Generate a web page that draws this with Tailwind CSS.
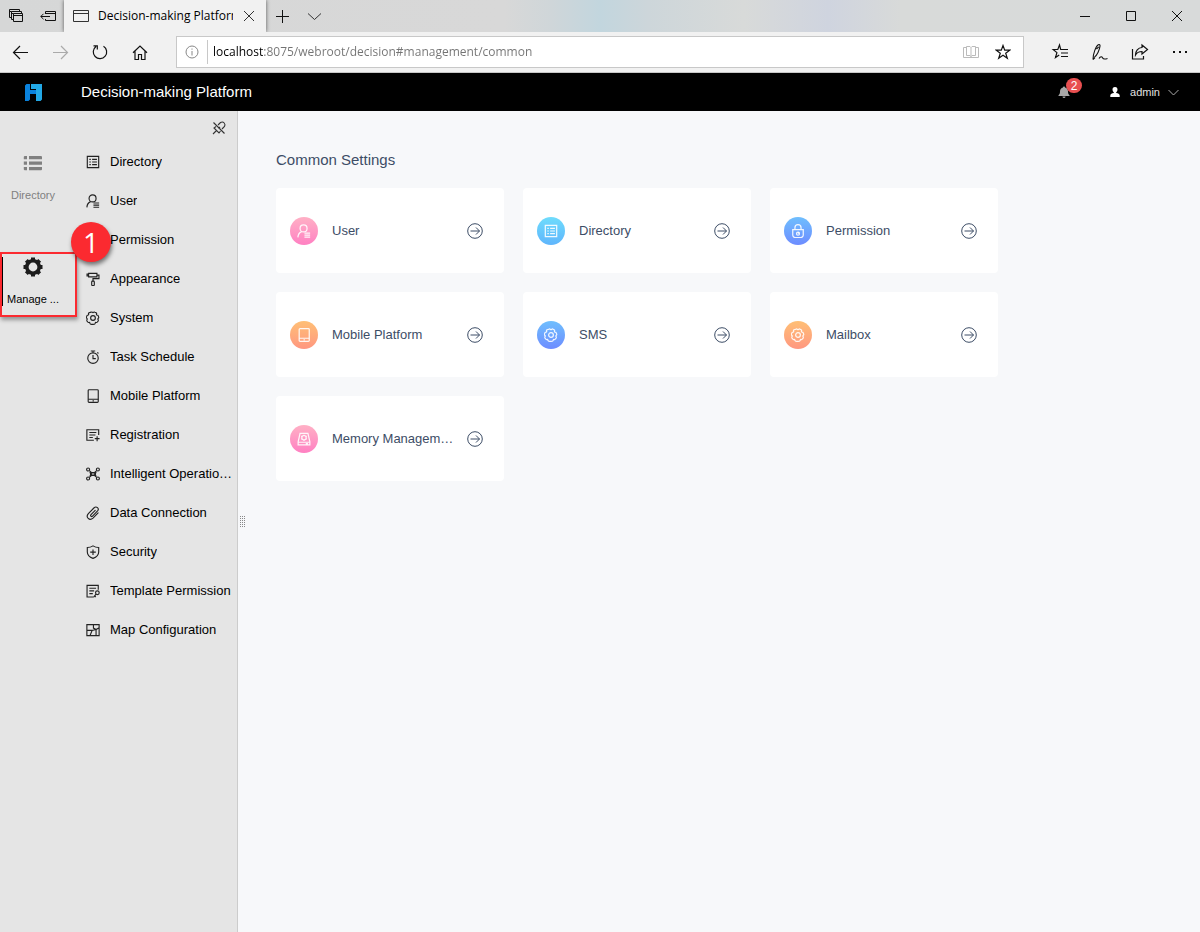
<!DOCTYPE html>
<html lang="en">
<head>
<meta charset="utf-8">
<title>Decision-making Platform</title>
<script src="https://cdn.jsdelivr.net/npm/@tailwindcss/browser@4"></script>
</head>
<body class="flex min-h-screen flex-col bg-[#f7f8fa] font-['Liberation_Sans',Arial,sans-serif] text-black">
<svg class="hidden" aria-hidden="true">
  <defs>
    <symbol id="i-directory" viewBox="0 0 16 16"><path d="M1.500 1.500h13v13h-13zM3.800 5h1.700M7 5h5.500M3.800 8h1.700M7 8h5.500M3.800 11h1.700M7 11h5.500"/></symbol>
    <symbol id="i-user" viewBox="0 0 16 16"><circle cx="7.500" cy="5" r="4"/><path d="M1 15.300c.2-3.400 1.800-5.600 4.300-6.600M8.500 10.300H15M8.500 12.700H15M8.500 15.100H15"/></symbol>
    <symbol id="i-lock" viewBox="0 0 16 16"><path d="M2 6.500h12V12.500a3 3 0 0 1-3 3H5a3 3 0 0 1-3-3zM4.500 6.500V4.200a3.500 3.500 0 0 1 7 0V6.500"/><circle cx="8" cy="11" r="1.700"/><path d="M8 11l1.200-1.800"/></symbol>
    <symbol id="i-roller" viewBox="0 0 16 16"><path d="M3 1.500h9.500v4H3zM3 2.500H1.200v2H3M12.500 3.500h2.300v4H8v3"/><rect x="6.500" y="10.500" width="3" height="5" rx="1"/></symbol>
    <symbol id="i-gear" viewBox="0 0 16 16"><path d="M5.900 1.300c.7-.4 1.200-.2 1.500.4.300.4.900.4 1.200 0 .3-.6.800-.8 1.500-.4l1.400.7c.7.4.8.900.5 1.500-.2.500.100 1 .6 1.100.700 0 1.200.4 1.400 1l.5 1.400c.2.700 0 1.200-.6 1.600-.4.300-.4.800-.1 1.200.4.600.4 1.100 0 1.700l-.8 1.100c-.4.600-.9.700-1.500.5-.5-.1-.9.200-.9.700 0 .7-.3 1.100-1 1.300l-1.600.2H6.400l-1-.2c-.7-.2-1-.6-1-1.300 0-.5-.4-.8-.9-.7-.6.200-1.100.1-1.500-.5l-.8-1.100c-.4-.6-.4-1.100 0-1.700.3-.4.300-.9-.1-1.200-.6-.4-.8-.9-.6-1.600L1 5.600c.2-.6.700-1 1.400-1 .5-.1.800-.6.600-1.100-.3-.6-.2-1.100.5-1.500z"/><circle cx="8" cy="8" r="2.700"/></symbol>
    <symbol id="i-clock" viewBox="0 0 16 16"><circle cx="8" cy="9.300" r="6"/><path d="M5.500 1.200h5M8 1.200v2M8 5.800v4h3.200M13 2.800l1.200 1.200"/></symbol>
    <symbol id="i-mobile" viewBox="0 0 16 16"><rect x="2.500" y=".800" width="11.500" height="14.500" rx="1"/><path d="M2.500 11.700H14M7.500 13.500h1.500"/></symbol>
    <symbol id="i-registration" viewBox="0 0 16 16"><path d="M14.500 8V2H1v12h8M3.800 5.200h8M3.800 8h7M3.800 10.800h4M12.700 9.500v5.500M10 12.200h5.500"/></symbol>
    <symbol id="i-network" viewBox="0 0 16 16"><circle cx="2.400" cy="2.900" r="1.700"/><circle cx="13.600" cy="2.900" r="1.700"/><circle cx="2.400" cy="13.100" r="1.700"/><circle cx="13.600" cy="13.100" r="1.700"/><circle cx="8" cy="8" r="1.700"/><path d="M3.800 4.100 6.800 6.800M12.200 4.100 9.200 6.800M3.800 11.900l3-2.700M12.200 11.900l-3-2.700M4.500 5.500C5.500 9 6 8 4.500 10.500M11.500 5.500c-1 3.500-1.500 2.500 0 5M6.500 6.500h3M6.500 9.500h3"/></symbol>
    <symbol id="i-clip" viewBox="0 0 16 16"><path d="m10.500 5-4.800 4.900c-1.200 1.400.6 2.900 1.800 1.700l5.700-5.900c2.400-2.900-1.300-6.200-4.200-3.400L2.700 8.600c-3.600 4.200 1.400 8.900 5.300 5.200l5.800-5.900" stroke-linecap="round"/></symbol>
    <symbol id="i-shield" viewBox="0 0 16 16"><path d="M8 1c2 1.300 4.200 1.900 6.500 1.900V8c0 3.500-2.500 5.800-6.500 7.300C4 13.800 1.500 11.500 1.500 8V2.900C3.800 2.900 6 2.300 8 1zM8 5v6.500M4.800 8.200h6.400"/></symbol>
    <symbol id="i-template" viewBox="0 0 16 16"><path d="M14 6.500V1.500H1.200v13.300H8M3.800 4.800h7.700M3.800 7.900h5.500M3.800 11h4"/><circle cx="13" cy="10" r="2.100"/><path d="m11.500 11.500-3 3.700M9.800 13.600l1.400 1.200"/></symbol>
    <symbol id="i-map" viewBox="0 0 16 16"><path d="M1 1.800h14v12.700H1zM1 8.500h6l-2.500 6M8.500 1.800v4l3 1.700L15 5.500M7 8.500l4.500-1v7"/></symbol>
    <symbol id="i-memory" viewBox="0 0 16 16"><path d="M3.500 1.500h9l2.200 9.700v3.500H1.300v-3.500zM1.300 11.700h13.400M10 13.200h2.500"/><circle cx="8" cy="6.500" r="2.500"/><path d="M8 3v1M8 9v1M5 4.700l.8.500M10.200 7.800l.8.500M5 8.300l.8-.5M10.200 5.200l.8-.5"/></symbol>
    <symbol id="i-go" viewBox="0 0 16 16"><circle cx="8" cy="8" r="7.300"/><path d="M3.500 8h9M9 4.500 12.500 8 9 11.500"/></symbol>
  </defs>
</svg>

<!-- Browser window: tab strip -->
<div class="flex h-8 shrink-0 items-stretch bg-[linear-gradient(90deg,#d6d7d7_0%,#d8d8d8_42%,#cfd6d9_46%,#c2d6de_50%,#cdd6da_54%,#d8dad9_62%,#cfd4df_69%,#d8dad9_75%,#d8dada_100%)]">
  <div class="flex w-16 items-center justify-between pr-2 pl-2">
    <button aria-label="Tabs you've set aside"><svg class="size-4" viewBox="0 0 16 16" fill="none" stroke="#111"><path d="M3.500 9.500h-2v-8h10v2M1.500 3.500h2M5.500 11.500h-2v-8h10v2M3.500 5.500h2"/><path d="M5.500 5.500h9v8h-9zM5.500 7.500h9"/></svg></button>
    <button aria-label="Set these tabs aside"><svg class="size-4" viewBox="0 0 16 16" fill="none" stroke="#111"><path d="M5.500 6V3.500h10v9h-10V11M5.500 5.500h10M10 8.500H.800M3.500 5.800.800 8.500l2.700 2.700"/></svg></button>
  </div>
  <div class="flex w-[202px] items-center bg-[#f1f1f1] px-2 shadow-[0_0_4px_rgba(0,0,0,0.6)] [clip-path:inset(0_-5px_0_-5px)]">
    <svg class="h-4 w-[18px] shrink-0" viewBox="0 0 18 16" fill="none" stroke="#333"><path d="M1.500 2.500h15v11h-15zM1.500 5.500h15"/></svg>
    <button class="ml-2 w-[135px] overflow-hidden text-left font-['Open_Sans',sans-serif] text-[12px] leading-5 whitespace-nowrap">Decision-making Platform</button>
    <button class="ml-2" aria-label="Close tab"><svg class="size-4" viewBox="0 0 16 16" fill="none" stroke="#333"><path d="m3 3 10 10M13 3 3 13"/></svg></button>
  </div>
  <div class="flex items-center gap-4 pl-2">
    <button aria-label="New tab"><svg class="size-4" viewBox="0 0 16 16" fill="none" stroke="#111"><path d="M8.500 2v13M2 8.500h13"/></svg></button>
    <button aria-label="Tab previews"><svg class="size-4" viewBox="0 0 16 16" fill="none" stroke="#333"><path d="m2 5.500 6.500 6 6.500-6"/></svg></button>
  </div>
  <div class="ml-auto flex items-center gap-[30px] pr-[15px]">
    <button aria-label="Minimize"><svg class="size-4" viewBox="0 0 16 16" fill="none" stroke="#111"><path d="M3 8.500h10"/></svg></button>
    <button aria-label="Maximize"><svg class="size-4" viewBox="0 0 16 16" fill="none" stroke="#111"><path d="M3.500 3.500h9v9h-9z"/></svg></button>
    <button aria-label="Close"><svg class="size-4" viewBox="0 0 16 16" fill="none" stroke="#111"><path d="m3 3 10 10M13 3 3 13"/></svg></button>
  </div>
</div>

<!-- Browser window: address bar -->
<div class="flex h-[41px] shrink-0 items-center border-b border-[#c8c8c8] bg-[#f1f1f1]">
  <div class="flex w-44 items-center gap-5 pl-[10px]">
    <button aria-label="Back"><svg class="size-5" viewBox="0 0 20 20" fill="none" stroke="#111" stroke-width="1.200"><path d="M18 10.500H3.500M10 4 3.500 10.500l6.500 6.500"/></svg></button>
    <button aria-label="Forward"><svg class="size-5" viewBox="0 0 20 20" fill="none" stroke="#aaa" stroke-width="1.200"><path d="M3 10.500h14.500M11 4l6.500 6.500-6.500 6.500"/></svg></button>
    <button aria-label="Refresh"><svg class="size-5" viewBox="0 0 20 20" fill="none" stroke="#111" stroke-width="1.200"><path d="M13.500 4.200a6.700 6.700 0 1 1-7.500.3M3.500 3.800h3.800v3.800"/></svg></button>
    <button aria-label="Home"><svg class="size-5" viewBox="0 0 20 20" fill="none" stroke="#111" stroke-width="1.200"><path d="M3 10.800 10 4l7 6.800M5 9v8.500h3.500v-5h3v5H15V9"/></svg></button>
  </div>
  <div class="flex h-8 flex-1 items-center border border-[#c8c8c8] bg-white">
    <svg class="ml-[7px] size-4" viewBox="0 0 16 16" fill="none" stroke="#888"><circle cx="8" cy="8" r="6"/><path d="M8 7v4.500M8 4.500v1.200"/></svg>
    <span class="ml-[7px] h-6 w-px bg-[#c8c8c8]"></span>
    <input aria-label="Address" value="localhost:8075/webroot/decision#management/common" class="ml-[5px] min-w-0 flex-1 bg-[linear-gradient(90deg,#000_51px,#737373_51px)] bg-clip-text font-['Open_Sans',sans-serif] text-[12px] leading-5 text-transparent outline-none">
    <button aria-label="Reading view"><svg class="size-4" viewBox="0 0 16 16" fill="none" stroke="#bbb"><path d="M3 3.500H.500v10h15v-10H13M3.500 2.500h3.500L8 3.500l1-1h3.500v9H9l-1 1-1-1H3.500zM8 3.500v10"/></svg></button>
    <button class="mr-3 ml-4" aria-label="Add to favorites"><svg class="size-4" viewBox="0 0 16 16" fill="none" stroke="#111" stroke-width="1.200"><path d="m8 1.500 1.700 4.700h5.100L10.700 9.200l1.600 5L8 11.200l-4.300 3 1.600-5L1.200 6.200h5.100z"/></svg></button>
  </div>
  <div class="flex w-44 items-center justify-end gap-5 pr-[10px]">
    <button aria-label="Hub"><svg class="size-5" viewBox="0 0 20 20" fill="none" stroke="#111" stroke-width="1.200"><path d="M11.500 7.500H10.700L9.500 3 7.800 7.500H3.200L6.900 10.600 5.500 15.500 9.200 12.900M10.700 7.500H18M11 11h7M11 14.500h7"/></svg></button>
    <button aria-label="Make a web note"><svg class="size-5" viewBox="0 0 20 20" fill="none" stroke="#111" stroke-width="1.100"><path d="M3 17.500c0-6 3-13.500 5.300-14.800 1-.5 2 .1 1.700 1.400C9.500 8 7 13.500 4.500 15M6.500 7l2.200-2.200M3 17.500l2-2M9 16.500c1.500-2.500 3-2 3.500-.8s2 1.800 5 .8"/></svg></button>
    <button aria-label="Share"><svg class="size-5" viewBox="0 0 20 20" fill="none" stroke="#111" stroke-width="1.200"><path d="M2.500 7v10h11v-3M12 3l5.500 4.500L12 12V9.500c-3 0-5 .8-6.500 3.500C5.500 9 8 5.700 12 5.500z"/></svg></button>
    <button aria-label="More"><svg class="size-5" viewBox="0 0 20 20" fill="#111"><path d="M3 9h2v2H3zM9 9h2v2H9zM15 9h2v2h-2z"/></svg></button>
  </div>
</div>

<!-- Platform header -->
<header class="flex h-[38px] shrink-0 items-center bg-black pr-[21px] text-white">
  <svg class="ml-6 h-[18px] w-[18px]" viewBox="0 0 18 18" aria-label="Logo"><path d="M1 2.500 2.500 1H6v6h6v4H6v5.500L4.500 18H1z" fill="#0a82dc"/><path d="M7 1h11v15.500L16.500 18H12V6H7z" fill="#22a8e6"/></svg>
  <h1 class="ml-[39px] text-[15px] leading-5">Decision-making Platform</h1>
  <button class="relative ml-auto" aria-label="2 messages">
    <svg class="size-3" viewBox="0 0 12 12" fill="#a8a8a8"><path d="M6 .500c.6 0 1 .4 1 1C9 2 10 3.500 10 5.500c0 1.800.4 2.700 1.500 3.700v.8H.500v-.8C1.600 8.200 2 7.300 2 5.500 2 3.500 3 2 5 1.500c0-.6.400-1 1-1zM4.500 10.500h3a1.500 1.500 0 0 1-3 0z"/></svg>
    <span class="absolute -top-2 left-2 flex h-[15px] w-4 items-center justify-center rounded-full bg-[#e84f50] text-[12px] leading-4">2</span>
  </button>
  <button class="ml-10 flex items-center text-[11px] leading-4 text-[#e2e2e2]">
    <svg class="size-[10px]" viewBox="0 0 10 10" fill="#fff"><path d="M5 0c1.800 0 2.600 1.200 2.500 2.700-.1 1.300-.6 2-1.300 2.500v.8c1.800.4 3.500 1 3.500 2.500V10H.300V8.500C.300 7 2 6.400 3.800 6v-.8C3.100 4.700 2.600 4 2.500 2.700 2.400 1.200 3.200 0 5 0z"/></svg>
    <span class="ml-[10px]">admin</span>
    <svg class="ml-2 h-3 w-[11px]" viewBox="0 0 11 12" fill="none" stroke="#aaa"><path d="m.500 4 5 5 5-5"/></svg>
  </button>
</header>

<div class="flex flex-1">
  <!-- Sidebar -->
  <aside class="relative flex w-[238px] shrink-0 border-r border-[#ccc] bg-[#e5e5e5]">
    <nav class="flex w-[66px] flex-col pt-[43px] text-center text-[11px] leading-4" aria-label="Modules">
      <button class="flex flex-col items-center text-[#808080]">
        <svg class="h-[18px] w-5" viewBox="0 0 20 18" fill="#808080"><path d="M1.500 2h2.500v3.200H.800V2.700zM6 2h12.300l.700.700v2.500H6zM.800 7.500H4v3.200H.800zM6 7.500h13v3.200H6zM.800 13H4v3.200H1.500l-.700-.700zM6 13h13v2.500l-.700.700H6z"/></svg>
        <span class="mt-[15px]">Directory</span>
      </button>
      <button class="mt-[54px] flex flex-col items-center text-black">
        <svg class="size-5" viewBox="0 0 20 20" fill="none" stroke="#1c1c1c"><circle cx="10" cy="10" r="6.200" stroke-width="3.600"/><path d="M10 .500v3M10 16.500v3M.500 10h3M16.500 10h3M3.300 3.300l2.100 2.100M14.600 14.600l2.100 2.100M3.300 16.700l2.100-2.100M14.600 5.400l2.100-2.100" stroke-width="4"/></svg>
        <span class="mt-[14px]">Manage ...</span>
      </button>
    </nav>
    <div class="flex min-w-0 flex-1 flex-col">
      <button class="mt-[9px] mr-[10px] self-end" aria-label="Unpin menu"><svg class="size-4" viewBox="0 0 16 16" fill="none" stroke="#333" stroke-width="1.100"><path d="m2.500 2.500 11 11M7 5l2.500-2.500c3-1.500 5.500 1.500 4 4L11 9M9.500 11l-1.500 2L3 8l2-1.500M5.500 10.500l-3.500 3.500M7.500 8.500l1.500-1.500"/></svg></button>
      <nav class="mt-[6px] flex flex-col pl-5 text-[13px] leading-5 [&_a]:flex [&_a]:h-[39px] [&_a]:items-center [&_a]:gap-[10px] [&_span]:truncate [&_svg]:size-[14px] [&_svg]:shrink-0 [&_svg]:fill-none [&_svg]:stroke-[#222] [&_svg]:stroke-[1.3px]" aria-label="Management">
        <a href="#directory"><svg><use href="#i-directory"/></svg><span>Directory</span></a>
        <a href="#user"><svg><use href="#i-user"/></svg><span>User</span></a>
        <a href="#permission"><svg><use href="#i-lock"/></svg><span>Permission</span></a>
        <a href="#appearance"><svg><use href="#i-roller"/></svg><span>Appearance</span></a>
        <a href="#system"><svg><use href="#i-gear"/></svg><span>System</span></a>
        <a href="#schedule"><svg><use href="#i-clock"/></svg><span>Task Schedule</span></a>
        <a href="#mobile"><svg><use href="#i-mobile"/></svg><span>Mobile Platform</span></a>
        <a href="#registration"><svg><use href="#i-registration"/></svg><span>Registration</span></a>
        <a href="#operations"><svg><use href="#i-network"/></svg><span>Intelligent Operatio…</span></a>
        <a href="#connection"><svg><use href="#i-clip"/></svg><span>Data Connection</span></a>
        <a href="#security"><svg><use href="#i-shield"/></svg><span>Security</span></a>
        <a href="#template"><svg><use href="#i-template"/></svg><span>Template Permission</span></a>
        <a href="#map"><svg><use href="#i-map"/></svg><span>Map Configuration</span></a>
      </nav>
    </div>
    <!-- Step callout over the Manage button -->
    <div class="absolute top-[146px] left-[2px] h-[49px] w-px bg-black"></div>
    <div class="absolute top-[141px] left-0 h-[65px] w-[77px] border-2 border-[#fb2a30] shadow-[1px_3px_4px_rgba(0,0,0,0.35)]"></div>
    <div class="absolute top-[111px] left-[71px] flex size-10 items-center justify-center rounded-full bg-[#fb2a30] font-['Open_Sans',sans-serif] text-[28px] leading-8 text-white shadow-[1px_3px_4px_rgba(0,0,0,0.5)]">1</div>
  </aside>

  <div class="flex w-2 shrink-0 items-center justify-center" role="separator" aria-label="Resize sidebar">
    <svg class="h-3 w-[5px]" viewBox="0 0 5 12" fill="#888"><path d="M0 0h1v1H0zM2 0h1v1H2zM4 0h1v1H4zM0 2h1v1H0zM2 2h1v1H2zM4 2h1v1H4zM0 4h1v1H0zM2 4h1v1H2zM4 4h1v1H4zM0 6h1v1H0zM2 6h1v1H2zM4 6h1v1H4zM0 8h1v1H0zM2 8h1v1H2zM4 8h1v1H4zM0 10h1v1H0zM2 10h1v1H2zM4 10h1v1H4z"/></svg>
  </div>

  <main class="flex-1 px-[30px] pt-[39px] text-[#3d4d66]">
    <h2 class="text-[15px] leading-5">Common Settings</h2>
    <div class="mt-[18px] grid grid-cols-[repeat(auto-fill,228px)] gap-x-[19px] gap-y-[19px] text-[13px] leading-5 [&_a]:flex [&_a]:h-[85px] [&_a]:items-center [&_a]:rounded [&_a]:bg-white [&_a]:pr-[21px] [&_a]:pl-[14px] [&_a>i]:flex [&_a>i]:size-7 [&_a>i]:shrink-0 [&_a>i]:items-center [&_a>i]:justify-center [&_a>i]:rounded-full [&_a>span]:ml-[14px] [&_a>span]:flex-1 [&_a>svg]:size-4 [&_a>svg]:stroke-[#3d4d66] [&_i>svg]:size-[14px] [&_i>svg]:stroke-white/90 [&_i>svg]:stroke-[1.4px] [&_svg]:fill-none">
      <a href="#user"><i class="bg-linear-to-b from-[#ffb0c5] to-[#ff80c2]"><svg><use href="#i-user"/></svg></i><span>User</span><svg><use href="#i-go"/></svg></a>
      <a href="#directory"><i class="bg-linear-to-b from-[#6fdcfc] to-[#5fb5fc]"><svg><use href="#i-directory"/></svg></i><span>Directory</span><svg><use href="#i-go"/></svg></a>
      <a href="#permission"><i class="bg-linear-to-b from-[#6fbefd] to-[#6d8cff]"><svg><use href="#i-lock"/></svg></i><span>Permission</span><svg><use href="#i-go"/></svg></a>
      <a href="#mobile"><i class="bg-linear-to-b from-[#ffbf75] to-[#ff9780]"><svg><use href="#i-mobile"/></svg></i><span>Mobile Platform</span><svg><use href="#i-go"/></svg></a>
      <a href="#sms"><i class="bg-linear-to-b from-[#6fbefd] to-[#6d8cff]"><svg><use href="#i-gear"/></svg></i><span>SMS</span><svg><use href="#i-go"/></svg></a>
      <a href="#mailbox"><i class="bg-linear-to-b from-[#ffbf75] to-[#ff9780]"><svg><use href="#i-gear"/></svg></i><span>Mailbox</span><svg><use href="#i-go"/></svg></a>
      <a href="#memory"><i class="bg-linear-to-b from-[#ffb0c5] to-[#ff80c2]"><svg><use href="#i-memory"/></svg></i><span>Memory Managem…</span><svg><use href="#i-go"/></svg></a>
    </div>
  </main>
</div>
</body>
</html>
